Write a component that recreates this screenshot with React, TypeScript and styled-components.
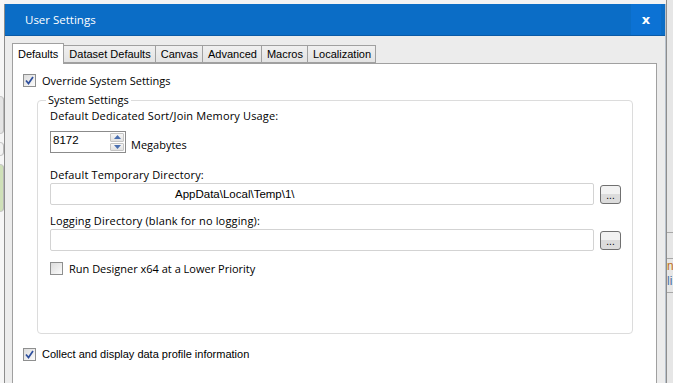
import styled, { createGlobalStyle } from "styled-components";

const GlobalStyle = createGlobalStyle`
  html, body {
    margin: 0;
    padding: 0;
    background: #f0f0f0;
    overflow: hidden;
  }
  body {
    font-family: "Open Sans", "Noto Sans", sans-serif;
    font-size: 11px;
    color: #000;
  }
`;

const Desktop = styled.div`
  display: flex;
  width: 673px;
  height: 383px;
  overflow: hidden;
  background: #f3f3f3;
`;

const LeftEdge = styled.div`
  width: 4px;
  flex: 0 0 4px;
  padding-top: 96px;
  display: flex;
  flex-direction: column;
  gap: 8px;
  background: #f6f6f6;
`;

const EdgeBlock = styled.div<{ $h: number; $color: string }>`
  height: ${({ $h }) => $h}px;
  border-right: 1px solid #b8b8b8;
  border-top: 1px solid #c8c8c8;
  border-bottom: 1px solid #c8c8c8;
  border-radius: 0 4px 4px 0;
  background: ${({ $color }) => $color};
`;

const Window = styled.div`
  width: 660px;
  flex: 0 0 660px;
  margin-top: 4px;
  display: flex;
  flex-direction: column;
  border-left: 1px solid #8d8d8d;
  border-right: 1px solid #b9c2cc;
  background: #ececec;
`;

const TitleBar = styled.div`
  height: 32px;
  flex: 0 0 32px;
  display: flex;
  align-items: center;
  justify-content: space-between;
  background: #0b6dc6;
  border-bottom: 1px solid #0a5aa6;
  box-sizing: border-box;
`;

const Title = styled.span`
  padding-left: 20px;
  color: #fff;
  font-family: "Open Sans", "Noto Sans", sans-serif;
  font-size: 11.5px;
`;

const CloseButton = styled.span`
  width: 30px;
  height: 100%;
  margin-right: 4px;
  display: flex;
  align-items: center;
  justify-content: center;
  background: #0c72d4;
  color: #fff;
  font-family: "DejaVu Sans", sans-serif;
  font-weight: bold;
  font-size: 13px;
`;

const Body = styled.div`
  flex: 1;
  display: flex;
  flex-direction: column;
  padding: 7px 8px 0 7px;
`;

const TabStrip = styled.div`
  display: flex;
  align-items: flex-end;
  height: 20px;
  position: relative;
  z-index: 1;
`;

const Tab = styled.div<{ $active?: boolean }>`
  height: ${({ $active }) => ($active ? 21 : 18)}px;
  box-sizing: border-box;
  padding: ${({ $active }) => ($active ? "0 5px" : "0 4px 0 5px")};
  margin-bottom: ${({ $active }) => ($active ? -1 : 0)}px;
  display: flex;
  align-items: center;
  border: 1px solid #a0a0a0;
  border-bottom: ${({ $active }) => ($active ? "none" : "1px solid #a0a0a0")};
  margin-left: -1px;
  background: ${({ $active }) =>
    $active ? "#fff" : "linear-gradient(#f0f0f0, #e3e3e3)"};
  font-family: "Liberation Sans", Arial, sans-serif;
  font-size: 11px;
  color: #000;
  &:first-child {
    margin-left: 0;
  }
`;

const Panel = styled.div`
  flex: 1;
  background: #fff;
  border: 1px solid #a0a0a0;
  border-bottom: none;
  padding: 9px 23px 0 10px;
  display: flex;
  flex-direction: column;
`;

const CheckRow = styled.label<{ $top?: number }>`
  display: flex;
  align-items: center;
  gap: 6px;
  height: 14px;
  margin-top: ${({ $top }) => $top ?? 0}px;
`;

const Box = styled.span`
  width: 13px;
  height: 13px;
  box-sizing: border-box;
  border: 1px solid #8e8f8f;
  background: linear-gradient(135deg, #dcdcdc, #fbfbfb);
  display: flex;
  align-items: center;
  justify-content: center;
`;

const Group = styled.fieldset`
  margin: 6px 0 0 14px;
  padding: 0 11px 0 12px;
  height: 241px;
  min-width: 0;
  box-sizing: border-box;
  border: 1px solid #dcdcdc;
  border-radius: 4px;
  display: flex;
  flex-direction: column;
`;

const Legend = styled.legend`
  padding: 0 2px;
  margin-left: -4px;
  font-size: 11px;
  line-height: 14px;
`;

const Label = styled.div<{ $top: number }>`
  margin-top: ${({ $top }) => $top}px;
  line-height: 14px;
  white-space: nowrap;
  letter-spacing: 0.15px;
`;

const SpinRow = styled.div`
  display: flex;
  align-items: flex-end;
  gap: 5px;
  margin-top: 8px;
`;

const Spinner = styled.div`
  width: 76px;
  height: 22px;
  box-sizing: border-box;
  border: 1px solid #8b8b8b;
  display: flex;
  justify-content: space-between;
  padding: 1px 1px 1px 2px;
`;

const SpinValue = styled.span`
  font-family: "Liberation Sans", Arial, sans-serif;
  font-size: 11.5px;
  line-height: 14px;
`;

const SpinButtons = styled.div`
  display: flex;
  flex-direction: column;
  gap: 1px;
  width: 14px;
`;

const SpinButton = styled.div`
  flex: 1;
  border: 1px solid #c4c4c4;
  border-radius: 1px;
  background: linear-gradient(#f6f6f6, #e2e2e2);
  display: flex;
  align-items: center;
  justify-content: center;
`;

const Unit = styled.span`
  line-height: 14px;
  margin-bottom: 1px;
`;

const PathRow = styled.div`
  display: flex;
  align-items: center;
  gap: 6px;
  margin-top: 1px;
`;

const PathInput = styled.div<{ $indent: number }>`
  flex: 1;
  height: 22px;
  box-sizing: border-box;
  border: 1px solid #d3d3d3;
  border-radius: 2px;
  padding-left: ${({ $indent }) => $indent}px;
  display: flex;
  align-items: center;
  font-family: "Liberation Sans", Arial, sans-serif;
  font-size: 11.5px;
`;

const BrowseButton = styled.div`
  width: 21px;
  height: 19px;
  flex: 0 0 21px;
  box-sizing: border-box;
  border: 1px solid #707070;
  border-radius: 3px;
  background: linear-gradient(#f2f2f2 50%, #dcdcdc 50%);
  display: flex;
  align-items: flex-end;
  justify-content: center;
  padding-bottom: 3px;
  font-family: "Liberation Sans", Arial, sans-serif;
  font-size: 10px;
  line-height: 8px;
`;

const CollectText = styled.span`
  font-family: "Liberation Sans", Arial, sans-serif;
  font-size: 11px;
`;

const RightEdge = styled.div`
  flex: 1;
  background: #e6e6e6;
  border-left: 1px solid #8d8d8d;
  display: flex;
  flex-direction: column;
  padding-top: 232px;
`;

const EdgeLine = styled.div<{ $gap: number }>`
  margin-top: ${({ $gap }) => $gap}px;
  border-top: 1px solid #a8a8a8;
`;

const EdgeText = styled.div<{ $color: string }>`
  font-family: "Liberation Sans", Arial, sans-serif;
  font-size: 12px;
  line-height: 15px;
  color: ${({ $color }) => $color};
  white-space: nowrap;
`;

function Check({ checked }: { checked?: boolean }) {
  return (
    <Box>
      {checked && (
        <svg width="9" height="9" viewBox="0 0 9 9">
          <path d="M1 4.5 L3.5 7.5 L8 1" fill="none" stroke="#2e4f9d" strokeWidth="1.7" />
        </svg>
      )}
    </Box>
  );
}

function Arrow({ up }: { up?: boolean }) {
  return (
    <svg width="7" height="4" viewBox="0 0 7 4">
      <path d={up ? "M0 4 L3.5 0 L7 4 Z" : "M0 0 L3.5 4 L7 0 Z"} fill="#4a6fb0" />
    </svg>
  );
}

const tabs = ["Defaults", "Dataset Defaults", "Canvas", "Advanced", "Macros", "Localization"];

export default function App() {
  return (
    <>
      <GlobalStyle />
      <Desktop>
        <LeftEdge>
          <EdgeBlock $h={36} $color="#e4e4e4" />
          <EdgeBlock $h={12} $color="#f3f3f3" />
          <EdgeBlock $h={46} $color="#cfe0b8" />
        </LeftEdge>
        <Window>
          <TitleBar>
            <Title>User Settings</Title>
            <CloseButton>x</CloseButton>
          </TitleBar>
          <Body>
            <TabStrip>
              {tabs.map((t, i) => (
                <Tab key={t} $active={i === 0}>
                  {t}
                </Tab>
              ))}
            </TabStrip>
            <Panel>
              <CheckRow>
                <Check checked />
                <span>Override System Settings</span>
              </CheckRow>
              <Group>
                <Legend>System Settings</Legend>
                <Label $top={2}>Default Dedicated Sort/Join Memory Usage:</Label>
                <SpinRow>
                  <Spinner>
                    <SpinValue>8172</SpinValue>
                    <SpinButtons>
                      <SpinButton>
                        <Arrow up />
                      </SpinButton>
                      <SpinButton>
                        <Arrow />
                      </SpinButton>
                    </SpinButtons>
                  </Spinner>
                  <Unit>Megabytes</Unit>
                </SpinRow>
                <Label $top={15}>Default Temporary Directory:</Label>
                <PathRow>
                  <PathInput $indent={124}>AppData\Local\Temp\1\</PathInput>
                  <BrowseButton>...</BrowseButton>
                </PathRow>
                <Label $top={9}>Logging Directory (blank for no logging):</Label>
                <PathRow>
                  <PathInput $indent={4} />
                  <BrowseButton>...</BrowseButton>
                </PathRow>
                <CheckRow $top={10}>
                  <Check />
                  <span>Run Designer x64 at a Lower Priority</span>
                </CheckRow>
              </Group>
              <CheckRow $top={13}>
                <Check checked />
                <CollectText>Collect and display data profile information</CollectText>
              </CheckRow>
            </Panel>
          </Body>
        </Window>
        <RightEdge>
          <EdgeLine $gap={0} />
          <EdgeLine $gap={25} />
          <EdgeText $color="#c07020">n</EdgeText>
          <EdgeText $color="#4a6fa0">li</EdgeText>
          <EdgeLine $gap={3} />
        </RightEdge>
      </Desktop>
    </>
  );
}
